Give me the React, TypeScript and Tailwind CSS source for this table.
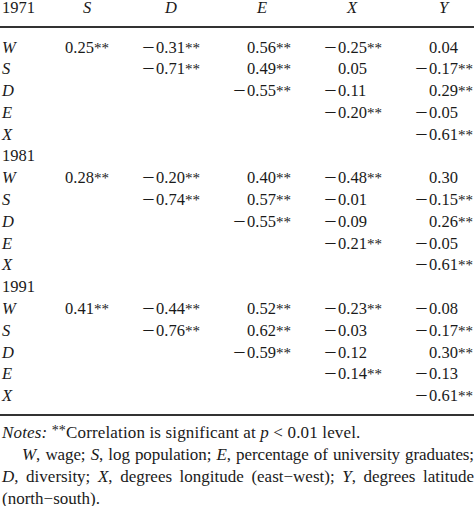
import React from "react";

type Row = { label: string; italic: boolean; cells: string[] };

const blocks: { year: string; rows: string[][] }[] = [
  {
    year: "1971",
    rows: [
      ["W", "0.25**", "-0.31**", "0.56**", "-0.25**", "0.04"],
      ["S", "", "-0.71**", "0.49**", "0.05", "-0.17**"],
      ["D", "", "", "-0.55**", "-0.11", "0.29**"],
      ["E", "", "", "", "-0.20**", "-0.05"],
      ["X", "", "", "", "", "-0.61**"],
    ],
  },
  {
    year: "1981",
    rows: [
      ["W", "0.28**", "-0.20**", "0.40**", "-0.48**", "0.30"],
      ["S", "", "-0.74**", "0.57**", "-0.01", "-0.15**"],
      ["D", "", "", "-0.55**", "-0.09", "0.26**"],
      ["E", "", "", "", "-0.21**", "-0.05"],
      ["X", "", "", "", "", "-0.61**"],
    ],
  },
  {
    year: "1991",
    rows: [
      ["W", "0.41**", "-0.44**", "0.52**", "-0.23**", "-0.08"],
      ["S", "", "-0.76**", "0.62**", "-0.03", "-0.17**"],
      ["D", "", "", "-0.59**", "-0.12", "0.30**"],
      ["E", "", "", "", "-0.14**", "-0.13"],
      ["X", "", "", "", "", "-0.61**"],
    ],
  },
];

function Num({ v }: { v: string }) {
  if (!v) return <span />;
  const neg = v.startsWith("-");
  const body = v.replace("-", "");
  const digits = body.replace(/\*/g, "");
  const stars = body.slice(digits.length);
  return (
    <span className="whitespace-nowrap">
      <span className={neg ? "inline-block w-[14px]" : "inline-block w-[14px] invisible"}>
        <span className="inline-block origin-left scale-x-[1.35]">−</span>
      </span>
      {digits}
      {stars && <span className="text-[15px]">{stars}</span>}
    </span>
  );
}

export default function App() {
  const rows: Row[] = [];
  blocks.forEach((b, bi) => {
    if (bi > 0) rows.push({ label: b.year, italic: false, cells: ["", "", "", "", ""] });
    b.rows.forEach((r) => rows.push({ label: r[0], italic: true, cells: r.slice(1) }));
  });

  return (
    <div className="w-[474px] h-[506px] overflow-hidden bg-white text-[#1a1a1a] font-['Liberation_Serif','Times_New_Roman',serif] text-[16.5px]">
      <div className="grid grid-cols-[51px_91px_91px_91px_91px_1fr] h-[17px] leading-[16px]">
        <div className="pl-[2px]">1971</div>
        <div className="pl-[32px] italic">S</div>
        <div className="pl-[23px] italic">D</div>
        <div className="pl-[24px] italic">E</div>
        <div className="pl-[23px] italic">X</div>
        <div className="pl-[24px] italic">Y</div>
      </div>
      <div className="mt-[9px] h-[2px] bg-[#333]" />
      <div className="mt-[8.5px] grid grid-cols-[51px_91px_91px_91px_91px_1fr] leading-[21.8px]">
        {rows.map((r, i) => (
          <React.Fragment key={i}>
            <div className={r.italic ? "pl-[2px] italic" : "pl-[2px]"}>{r.label}</div>
            {r.cells.map((c, j) => (
              <div key={j} className="h-[21.8px]">
                <Num v={c} />
              </div>
            ))}
          </React.Fragment>
        ))}
      </div>
      <div className="mt-[7px] h-[2px] bg-[#333]" />
      <div className="mt-[4px] leading-[22px] text-[17px] pl-[2px]">
        <div className="whitespace-nowrap tracking-[0.15px]">
          <span className="italic">Notes:</span> <span className="text-[14px] align-[3px]">**</span>Correlation is significant at <span className="italic">p</span> &lt; 0.01 level.
        </div>
        <div className="pl-[20px] text-justify [text-align-last:justify] tracking-[-0.1px]">
          <span className="italic">W</span>, wage; <span className="italic">S</span>, log population; <span className="italic">E</span>, percentage of university graduates;
        </div>
        <div className="text-justify [text-align-last:justify]">
          <span className="italic">D</span>, diversity; <span className="italic">X</span>, degrees longitude (east−west); <span className="italic">Y</span>, degrees latitude
        </div>
        <div className="whitespace-nowrap">(north−south).</div>
      </div>
    </div>
  );
}
